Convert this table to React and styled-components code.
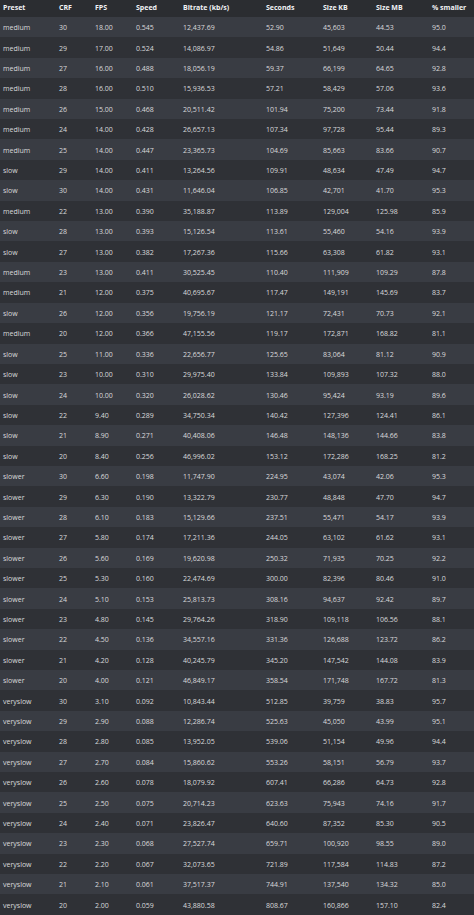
import React from "react";
import styled, { createGlobalStyle } from "styled-components";

const GlobalStyle = createGlobalStyle`
  html,
  body {
    margin: 0;
    padding: 0;
    background-color: #2f3136;
  }
`;

const columns = [
  { label: "Preset", width: 56 },
  { label: "CRF", width: 36 },
  { label: "FPS", width: 41 },
  { label: "Speed", width: 47 },
  { label: "Bitrate (kb/s)", width: 83 },
  { label: "Seconds", width: 57 },
  { label: "Size KB", width: 53 },
  { label: "Size MB", width: 56 },
  { label: "% smaller", width: 45 }
];

const rows = [
  ["medium", "30", "18.00", "0.545", "12,437.69", "52.90", "45,603", "44.53", "95.0"],
  ["medium", "29", "17.00", "0.524", "14,086.97", "54.86", "51,649", "50.44", "94.4"],
  ["medium", "27", "16.00", "0.488", "18,056.19", "59.37", "66,199", "64.65", "92.8"],
  ["medium", "28", "16.00", "0.510", "15,936.53", "57.21", "58,429", "57.06", "93.6"],
  ["medium", "26", "15.00", "0.468", "20,511.42", "101.94", "75,200", "73.44", "91.8"],
  ["medium", "24", "14.00", "0.428", "26,657.13", "107.34", "97,728", "95.44", "89.3"],
  ["medium", "25", "14.00", "0.447", "23,365.73", "104.69", "85,663", "83.66", "90.7"],
  ["slow", "29", "14.00", "0.411", "13,264.56", "109.91", "48,634", "47.49", "94.7"],
  ["slow", "30", "14.00", "0.431", "11,646.04", "106.85", "42,701", "41.70", "95.3"],
  ["medium", "22", "13.00", "0.390", "35,188.87", "113.89", "129,004", "125.98", "85.9"],
  ["slow", "28", "13.00", "0.393", "15,126.54", "113.61", "55,460", "54.16", "93.9"],
  ["slow", "27", "13.00", "0.382", "17,267.36", "115.66", "63,308", "61.82", "93.1"],
  ["medium", "23", "13.00", "0.411", "30,525.45", "110.40", "111,909", "109.29", "87.8"],
  ["medium", "21", "12.00", "0.375", "40,695.67", "117.47", "149,191", "145.69", "83.7"],
  ["slow", "26", "12.00", "0.356", "19,756.19", "121.17", "72,431", "70.73", "92.1"],
  ["medium", "20", "12.00", "0.366", "47,155.56", "119.17", "172,871", "168.82", "81.1"],
  ["slow", "25", "11.00", "0.336", "22,656.77", "125.65", "83,064", "81.12", "90.9"],
  ["slow", "23", "10.00", "0.310", "29,975.40", "133.84", "109,893", "107.32", "88.0"],
  ["slow", "24", "10.00", "0.320", "26,028.62", "130.46", "95,424", "93.19", "89.6"],
  ["slow", "22", "9.40", "0.289", "34,750.34", "140.42", "127,396", "124.41", "86.1"],
  ["slow", "21", "8.90", "0.271", "40,408.06", "146.48", "148,136", "144.66", "83.8"],
  ["slow", "20", "8.40", "0.256", "46,996.02", "153.12", "172,286", "168.25", "81.2"],
  ["slower", "30", "6.60", "0.198", "11,747.90", "224.95", "43,074", "42.06", "95.3"],
  ["slower", "29", "6.30", "0.190", "13,322.79", "230.77", "48,848", "47.70", "94.7"],
  ["slower", "28", "6.10", "0.183", "15,129.66", "237.51", "55,471", "54.17", "93.9"],
  ["slower", "27", "5.80", "0.174", "17,211.36", "244.05", "63,102", "61.62", "93.1"],
  ["slower", "26", "5.60", "0.169", "19,620.98", "250.32", "71,935", "70.25", "92.2"],
  ["slower", "25", "5.30", "0.160", "22,474.69", "300.00", "82,396", "80.46", "91.0"],
  ["slower", "24", "5.10", "0.153", "25,813.73", "308.16", "94,637", "92.42", "89.7"],
  ["slower", "23", "4.80", "0.145", "29,764.26", "318.90", "109,118", "106.56", "88.1"],
  ["slower", "22", "4.50", "0.136", "34,557.16", "331.36", "126,688", "123.72", "86.2"],
  ["slower", "21", "4.20", "0.128", "40,245.79", "345.20", "147,542", "144.08", "83.9"],
  ["slower", "20", "4.00", "0.121", "46,849.17", "358.54", "171,748", "167.72", "81.3"],
  ["veryslow", "30", "3.10", "0.092", "10,843.44", "512.85", "39,759", "38.83", "95.7"],
  ["veryslow", "29", "2.90", "0.088", "12,286.74", "525.63", "45,050", "43.99", "95.1"],
  ["veryslow", "28", "2.80", "0.085", "13,952.05", "539.06", "51,154", "49.96", "94.4"],
  ["veryslow", "27", "2.70", "0.084", "15,860.62", "553.26", "58,151", "56.79", "93.7"],
  ["veryslow", "26", "2.60", "0.078", "18,079.92", "607.41", "66,286", "64.73", "92.8"],
  ["veryslow", "25", "2.50", "0.075", "20,714.23", "623.63", "75,943", "74.16", "91.7"],
  ["veryslow", "24", "2.40", "0.071", "23,826.47", "640.60", "87,352", "85.30", "90.5"],
  ["veryslow", "23", "2.30", "0.068", "27,527.74", "659.71", "100,920", "98.55", "89.0"],
  ["veryslow", "22", "2.20", "0.067", "32,073.65", "721.89", "117,584", "114.83", "87.2"],
  ["veryslow", "21", "2.10", "0.061", "37,517.37", "744.91", "137,540", "134.32", "85.0"],
  ["veryslow", "20", "2.00", "0.059", "43,880.58", "808.67", "160,866", "157.10", "82.4"]
];

const Table = styled.table`
  width: 474px;
  border-collapse: collapse;
  table-layout: fixed;
  font-family: "Open Sans", "Noto Sans", sans-serif;
  font-size: 7px;
  color: #d9dadc;
`;

const HeadRow = styled.tr`
  height: 17px;
  background-color: #2b2d31;
`;

const HeadCell = styled.th`
  padding: 0 0 2px 3px;
  text-align: left;
  font-weight: 700;
  color: #f2f3f5;
  white-space: nowrap;
`;

const Row = styled.tr`
  height: 20.41px;
  background-color: ${({ $odd }) => ($odd ? "#393c43" : "#2f3136")};
`;

const Cell = styled.td`
  padding: 1px 0 0 3px;
  white-space: nowrap;
`;

const App = () => {
  return (
    <>
      <GlobalStyle />
      <Table>
        <colgroup>
          {columns.map((col) => (
            <col key={col.label} style={{ width: col.width }} />
          ))}
        </colgroup>
        <thead>
          <HeadRow>
            {columns.map((col) => (
              <HeadCell key={col.label}>{col.label}</HeadCell>
            ))}
          </HeadRow>
        </thead>
        <tbody>
          {rows.map((row, i) => (
            <Row key={i} $odd={i % 2 === 0}>
              {row.map((value, j) => (
                <Cell key={j}>{value}</Cell>
              ))}
            </Row>
          ))}
        </tbody>
      </Table>
    </>
  );
};

export default App;
